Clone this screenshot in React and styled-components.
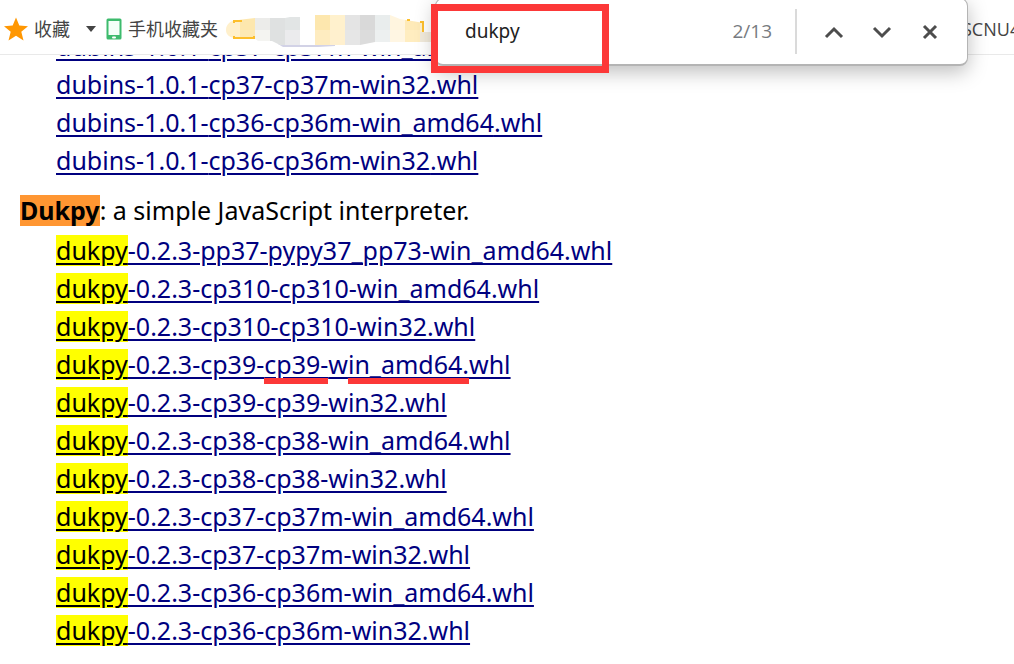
import React from "react";
import styled, { createGlobalStyle } from "styled-components";

const GlobalStyle = createGlobalStyle`
  * {
    box-sizing: border-box;
  }
  body {
    margin: 0;
    background-color: #fff;
    color: #000;
    font-family: "Noto Sans", "Noto Sans CJK SC", sans-serif;
  }
`;

const BrowserStyle = styled.div`
  position: relative;
  min-height: 100vh;
  overflow: hidden;
`;

const BookmarkBar = styled.nav`
  position: relative;
  display: flex;
  align-items: center;
  height: 55px;
  padding: 4px 0 0 4px;
  background-color: #fff;
  border-bottom: 1px solid #e9e9e9;
`;

const Bookmark = styled.button`
  display: flex;
  align-items: center;
  gap: 6px;
  padding: 0;
  border: none;
  background: none;
  color: #444;
  font-family: "Open Sans", "Noto Sans CJK SC", sans-serif;
  font-size: 18px;
  font-weight: 400;
  line-height: 24px;
  white-space: nowrap;
  svg {
    flex-shrink: 0;
  }
`;

const Arrow = styled.svg`
  margin: 0 10px;
`;

const Mosaic = styled.svg`
  align-self: flex-start;
  margin-left: 8px;
  margin-top: 8px;
`;

const LastBookmark = styled(Bookmark)`
  width: 52px;
  margin-left: auto;
  overflow: hidden;
`;

const FindBar = styled.form`
  position: absolute;
  top: -2px;
  right: 46px;
  z-index: 2;
  display: flex;
  align-items: center;
  width: 533px;
  height: 68px;
  padding: 0 25px 0 29px;
  background-color: #fff;
  border: 1px solid #b4b4b4;
  border-bottom-width: 2px;
  border-radius: 8px;
  box-shadow: 0 6px 20px rgba(0, 0, 0, 0.26);
`;

const FindInput = styled.input`
  flex: 1;
  min-width: 0;
  padding: 0 0 2px;
  border: none;
  outline: none;
  background: none;
  color: #222;
  font-family: "Noto Sans", sans-serif;
  font-size: 19px;
  line-height: 26px;
`;

const FindCount = styled.span`
  padding-bottom: 2px;
  color: #777b80;
  font-family: "Open Sans", sans-serif;
  font-size: 19px;
  font-weight: 400;
`;

const FindDivider = styled.span`
  width: 2px;
  height: 45px;
  margin: 0 25px 0 23px;
  background-color: #dadada;
`;

const FindActions = styled.div`
  display: flex;
  gap: 24px;
`;

const IconButton = styled.button`
  display: flex;
  padding: 0;
  border: none;
  background: none;
`;

const RedBox = styled.div`
  position: absolute;
  top: 5px;
  left: -5px;
  width: 178px;
  height: 69px;
  border: 7px solid #fc3838;
  pointer-events: none;
`;

const Page = styled.main`
  overflow: hidden;
`;

// the page is scrolled, the first row is half under the bookmark bar
const Scrolled = styled.div`
  margin-top: -28px;
  padding-left: 20px;
  font-size: 25px;
  line-height: 38px;
  white-space: nowrap;
`;

const Title = styled.div`
  margin: 12px 0 2px;
`;

const FileList = styled.ul`
  margin: 0;
  padding: 0 0 0 36px;
  list-style: none;
`;

const FileLink = styled.a`
  color: #00007f;
  text-decoration: underline;
  text-decoration-thickness: 2px;
  text-underline-offset: 3px;
`;

const Mark = styled.mark`
  background-color: ${(props) => (props.$active ? "#ff9632" : "#ff0")};
  color: #000;
  display: inline-block;
  height: 31px;
  line-height: 31px;
  text-decoration: inherit;
`;

const RedLine = styled.span`
  position: relative;
  &::after {
    content: "";
    position: absolute;
    left: 0;
    right: 0;
    bottom: -3px;
    height: 6px;
    background-color: #fc3838;
  }
`;

const dubins = ["cp37-cp37m-win_amd64", "cp37-cp37m-win32", "cp36-cp36m-win_amd64", "cp36-cp36m-win32"];

const dukpy = [
  "pp37-pypy37_pp73-win_amd64",
  "cp310-cp310-win_amd64",
  "cp310-cp310-win32",
  "cp39-cp39-win_amd64",
  "cp39-cp39-win32",
  "cp38-cp38-win_amd64",
  "cp38-cp38-win32",
  "cp37-cp37m-win_amd64",
  "cp37-cp37m-win32",
  "cp36-cp36m-win_amd64",
  "cp36-cp36m-win32",
];

const wanted = "cp39-cp39-win_amd64";

const mosaicTop = ["#fff0cc", "#fde7ae", "#ececea", "#dfe1e1", "#e2e5e5", "#fff", "#fde7ae", "#fff1cd", "#e4e4e4", "#d9d9d9", "#e9eded", "#fff5df", "#feeab8"];
const mosaicBottom = ["#fff0cc", "#fde9b4", "#f4f4f1", "#dfe1e1", "#ebebed", "#fff", "#feecc0", "#fff0ce", "#e6e6e6", "#dcdcdc", "#edf0f0", "#fff6e3", "#ffedc0"];

const HiddenBookmarks = () => (
  <Mosaic width="205" height="36" viewBox="226 12 205 36" aria-hidden="true">
    <defs>
      <clipPath id="smudge">
        <path d="M226 30C226 24 231 20 238 20L255 18H285L290 17H300V15H390L400 19L412 21L424 23V32H431V42H375L360 45H280L272 41H258L254 38H240C230 39 226 35 226 30Z" />
      </clipPath>
    </defs>
    <path d="M278 44H335V46L318 47H283Z" fill="#d2d2e6" />
    <g clipPath="url(#smudge)">
      {mosaicTop.map((color, i) => (
        <rect key={i} x={225 + i * 15} y="15" width="15" height="15" fill={color} />
      ))}
      {mosaicBottom.map((color, i) => (
        <rect key={i} x={225 + i * 15} y="30" width="15" height="15" fill={color} />
      ))}
      <path d="M420 22H431V32H420Z" fill="#fff0cc" />
      <path d="M420 32H431V42H420Z" fill="#f1eadb" />
    </g>
    <path d="M234 23V21H242M234 36V38H254V36M407 20H410M420 22H423V32" fill="none" stroke="#fdbf2d" strokeWidth="2" />
  </Mosaic>
);

const Find = () => (
  <FindBar onSubmit={(e) => e.preventDefault()}>
    <FindInput type="text" aria-label="Find" defaultValue="dukpy" spellCheck={false} />
    <FindCount>2/13</FindCount>
    <FindDivider />
    <FindActions>
      <IconButton type="button" aria-label="Previous">
        <svg width="24" height="24" viewBox="0 0 24 24" fill="none" stroke="#4d4d4d" strokeWidth="3">
          <path d="M4 17L12 9L20 17" />
        </svg>
      </IconButton>
      <IconButton type="button" aria-label="Next">
        <svg width="24" height="24" viewBox="0 0 24 24" fill="none" stroke="#4d4d4d" strokeWidth="3">
          <path d="M4 8L12 16L20 8" />
        </svg>
      </IconButton>
      <IconButton type="button" aria-label="Close">
        <svg width="24" height="24" viewBox="0 0 24 24" fill="none" stroke="#4d4d4d" strokeWidth="3">
          <path d="M6 6L18 18M18 6L6 18" />
        </svg>
      </IconButton>
    </FindActions>
    <RedBox />
  </FindBar>
);

const App = () => {
  return (
    <BrowserStyle>
      <GlobalStyle />
      <BookmarkBar>
        <Bookmark type="button">
          <svg width="24" height="24" viewBox="0 0 24 24">
            <path d="M12 0.5L15.3 8.6L24 9.2L17.3 14.8L19.5 23.5L12 18.8L4.5 23.5L6.7 14.8L0 9.2L8.7 8.6Z" fill="#ff9702" />
          </svg>
          收藏
          <Arrow width="10" height="6" viewBox="0 0 10 6">
            <path d="M0 0H10L5 6Z" fill="#444" />
          </Arrow>
        </Bookmark>
        <Bookmark type="button">
          <svg width="16" height="22" viewBox="0 0 16 22">
            <rect x="0.5" y="0.5" width="15" height="21" rx="1.5" fill="#3dbb6d" />
            <rect x="2.5" y="3" width="11" height="14" fill="#f3fff8" />
            <rect x="6" y="18.5" width="4" height="2" rx="1" fill="#fff" />
          </svg>
          手机收藏夹
        </Bookmark>
        <HiddenBookmarks />
        <LastBookmark type="button">SCNU4</LastBookmark>
      </BookmarkBar>
      <Find />
      <Page>
        <Scrolled>
          <FileList>
            {dubins.map((name) => (
              <li key={name}>
                <FileLink href="#">dubins-1.0.1-{name}.whl</FileLink>
              </li>
            ))}
          </FileList>
          <Title>
            <Mark as="strong" $active>
              Dukpy
            </Mark>
            : a simple JavaScript interpreter.
          </Title>
          <FileList>
            {dukpy.map((name) => (
              <li key={name}>
                <FileLink href="#">
                  <Mark>dukpy</Mark>
                  {name === wanted ? (
                    <>
                      -0.2.3-cp39-<RedLine>cp39-</RedLine>w<RedLine>in_amd64.</RedLine>whl
                    </>
                  ) : (
                    `-0.2.3-${name}.whl`
                  )}
                </FileLink>
              </li>
            ))}
          </FileList>
        </Scrolled>
      </Page>
    </BrowserStyle>
  );
};

export default App;
